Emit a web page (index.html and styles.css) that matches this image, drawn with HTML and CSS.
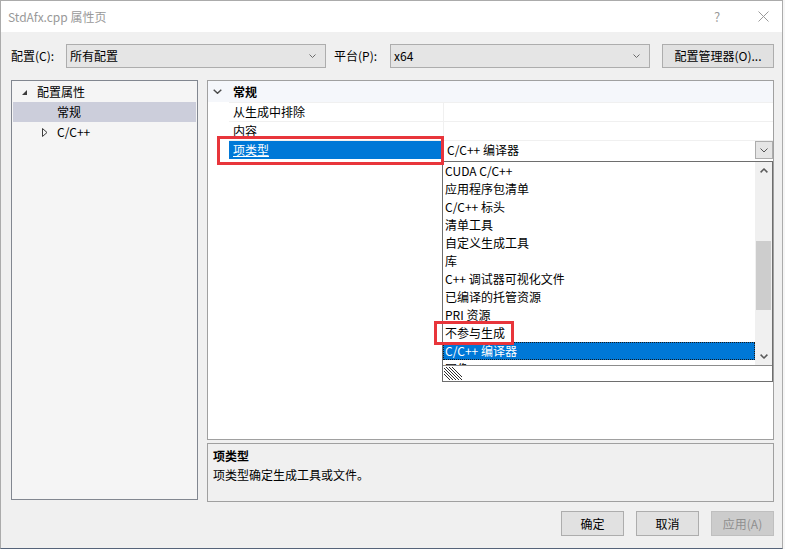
FILE: index.html
```html
<!DOCTYPE html>
<html lang="zh-CN">
<head>
<meta charset="utf-8">
<title>StdAfx.cpp 属性页</title>
<link rel="stylesheet" href="styles.css">
</head>
<body>
<div class="window">
  <div class="titlebar">
    <span class="title">StdAfx.cpp 属性页</span>
    <span class="help">?</span>
    <svg class="close" width="11" height="11" viewBox="0 0 11 11"><path d="M0.5 0.5 L10.5 10.5 M10.5 0.5 L0.5 10.5" stroke="#9a9a9a" stroke-width="1" fill="none"/></svg>
  </div>

  <div class="body">
    <div class="config-row">
      <span class="cfg-label">配置(C):</span>
      <div class="combo">
        <span class="combo-text">所有配置</span>
        <svg width="7" height="4" viewBox="0 0 7 4"><path d="M0.5 0.5 L3.5 3.5 L6.5 0.5" fill="none" stroke="#6a6a6a"/></svg>
      </div>
      <span class="cfg-label cfg-label-2">平台(P):</span>
      <div class="combo">
        <span class="combo-text">x64</span>
        <svg width="7" height="4" viewBox="0 0 7 4"><path d="M0.5 0.5 L3.5 3.5 L6.5 0.5" fill="none" stroke="#6a6a6a"/></svg>
      </div>
      <button class="btn btn-mgr">配置管理器(O)...</button>
    </div>

    <div class="main">
      <div class="tree">
        <div class="tree-row row-root">
          <svg class="twisty" width="5" height="5" viewBox="0 0 5 5"><path d="M5 0 L5 5 L0 5 Z" fill="#3c3c3c"/></svg>
          <span>配置属性</span>
        </div>
        <div class="tree-row row-leaf sel"><span>常规</span></div>
        <div class="tree-row row-child">
          <svg class="twisty" width="6" height="9" viewBox="0 0 6 9"><path d="M0.5 0.5 L5 4.5 L0.5 8.5 Z" fill="none" stroke="#3c3c3c"/></svg>
          <span>C/C++</span>
        </div>
      </div>

      <div class="right">
        <div class="grid">
          <div class="grid-head">
            <span class="gutter">
              <svg width="9" height="5" viewBox="0 0 9 5"><path d="M0.7 0.7 L4.5 4.3 L8.3 0.7" fill="none" stroke="#4a4a4a" stroke-width="1.4"/></svg>
            </span>
            <span class="head-name">常规</span>
          </div>
          <div class="grid-row">
            <span class="gutter"></span>
            <span class="name">从生成中排除</span>
            <span class="value"></span>
          </div>
          <div class="grid-row">
            <span class="gutter"></span>
            <span class="name">内容</span>
            <span class="value"></span>
          </div>
          <div class="grid-row">
            <span class="gutter"></span>
            <span class="name name-sel">项类型</span>
            <span class="value">
              <span class="value-text">C/C++ 编译器</span>
              <span class="drop-btn">
                <svg width="8" height="5" viewBox="0 0 8 5"><path d="M0.5 0.5 L4 4 L7.5 0.5" fill="none" stroke="#555"/></svg>
              </span>
            </span>
          </div>
        </div>
        <div class="desc">
          <div class="desc-title">项类型</div>
          <div>项类型确定生成工具或文件。</div>
        </div>
      </div>
    </div>

    <div class="buttons">
      <button class="btn">确定</button>
      <button class="btn">取消</button>
      <button class="btn btn-disabled">应用(A)</button>
    </div>
  </div>

  <!-- open item-type list, drawn over the grid -->
  <div class="dropdown">
    <div class="list-view">
      <div class="items">
        <div class="item">CUDA C/C++</div>
        <div class="item">应用程序包清单</div>
        <div class="item">C/C++ 标头</div>
        <div class="item">清单工具</div>
        <div class="item">自定义生成工具</div>
        <div class="item">库</div>
        <div class="item">C++ 调试器可视化文件</div>
        <div class="item">已编译的托管资源</div>
        <div class="item">PRI 资源</div>
        <div class="item">不参与生成</div>
        <div class="item item-sel">C/C++ 编译器</div>
        <div class="item">图像</div>
      </div>
      <div class="scrollbar">
        <div class="sb-arrow">
          <svg width="8" height="5" viewBox="0 0 8 5"><path d="M0.6 4.4 L4 1 L7.4 4.4" fill="none" stroke="#5a5a5a" stroke-width="1.5"/></svg>
        </div>
        <div class="sb-track"><div class="sb-thumb"></div></div>
        <div class="sb-arrow">
          <svg width="8" height="5" viewBox="0 0 8 5"><path d="M0.6 0.6 L4 4 L7.4 0.6" fill="none" stroke="#5a5a5a" stroke-width="1.5"/></svg>
        </div>
      </div>
    </div>
    <div class="grip-bar">
      <svg class="grip" width="18" height="13" viewBox="0 0 18 13">
        <path d="M0 1 L12 13 M2 0 L15 13 M5 0 L18 13 M8 0 L18 10 M0 4 L9 13 M0 7 L6 13" stroke="#2e2e2e" stroke-width="1" fill="none"/>
      </svg>
    </div>
  </div>

  <div class="mark mark-type"></div>
  <div class="mark mark-none"></div>
</div>
</body>
</html>
```

FILE: styles.css
```css
* {
  box-sizing: border-box;
  margin: 0;
  padding: 0;
}

html, body {
  width: 785px;
  height: 549px;
  overflow: hidden;
}

body {
  background: #f6f6f6;
  font-family: "Noto Sans CJK SC", "Noto Sans", sans-serif;
  font-size: 12px;
  color: #000;
}

.window {
  position: relative;
  width: 783px;
  height: 549px;
  border: 1px solid #ababab;
  border-bottom-color: #56647a;
  background: #f0f0f0;
  display: flex;
  flex-direction: column;
}

/* title bar */
.titlebar {
  flex: none;
  height: 31px;
  background: #fff;
  display: flex;
  align-items: center;
  padding-left: 7px;
  color: #999;
  line-height: 16px;
}

.title {
  flex: 1;
}

.help {
  width: 14px;
  text-align: center;
  font-size: 13px;
  margin-right: 34px;
  color: #9a9a9a;
}

.close {
  margin-right: 13px;
}

/* dialog body */
.body {
  flex: 1;
  display: flex;
  flex-direction: column;
  padding: 12px 8px 0 10px;
}

.config-row {
  display: flex;
  align-items: center;
  height: 24px;
  line-height: 16px;
}

.cfg-label {
  width: 55px;
}

.cfg-label-2 {
  width: 56px;
  margin-left: 8px;
}

.combo {
  width: 260px;
  height: 24px;
  border: 1px solid #adadad;
  background: #e5e5e5;
  display: flex;
  align-items: center;
  padding: 0 9px 0 3px;
}

.combo-text {
  flex: 1;
}

.btn {
  width: 63px;
  height: 25px;
  border: 1px solid #adadad;
  background: #e1e1e1;
  font: inherit;
  color: #000;
  line-height: 16px;
}

.btn-mgr {
  margin-left: auto;
  width: 112px;
  height: 24px;
}

.btn-disabled {
  background: #cccccc;
  border-color: #bfbfbf;
  color: #8f8f8f;
}

.main {
  display: flex;
  gap: 9px;
  margin-top: 12px;
  height: 422px;
}

/* category tree */
.tree {
  width: 187px;
  height: 420px;
  border: 1px solid #828790;
  background: #f5f5f5;
  padding: 1px;
}

.tree-row {
  height: 20px;
  display: flex;
  align-items: center;
  line-height: 16px;
}

.tree-row.sel {
  background: #cccedb;
}

.row-root {
  padding-left: 9px;
}

.row-root .twisty {
  margin-right: 10px;
}

.row-leaf {
  padding-left: 44px;
}

.row-child {
  padding-left: 29px;
}

.row-child .twisty {
  margin-right: 9px;
}

.right {
  flex: 1;
  display: flex;
  flex-direction: column;
  gap: 3px;
}

/* property grid */
.grid {
  height: 360px;
  border: 1px solid #a0a0a0;
  background: #fff;
}

.grid-head {
  height: 21px;
  display: flex;
  align-items: center;
  background: #f5f7fb;
  line-height: 16px;
}

.gutter {
  width: 21px;
  flex: none;
  display: flex;
  align-items: center;
  padding-left: 5px;
  align-self: stretch;
}

.head-name {
  font-weight: bold;
  padding-left: 4px;
}

.grid-row {
  height: 19px;
  display: flex;
  line-height: 16px;
}

.name {
  width: 214px;
  flex: none;
  border-top: 1px solid #f0f0f0;
  padding-left: 4px;
  display: flex;
  align-items: center;
}

.name-sel {
  background: #0078d7;
  color: #fff;
  text-decoration: underline;
  margin-right: 2px;
  width: 212px;
  background-clip: padding-box;
}

.value {
  flex: 1;
  border-top: 1px solid #f0f0f0;
  border-left: 1px solid #f0f0f0;
  display: flex;
  align-items: center;
  padding-left: 3px;
}

.value-text {
  flex: 1;
}

.drop-btn {
  width: 18px;
  height: 18px;
  border: 1px solid #acacac;
  background: #e5e5e5;
  display: flex;
  align-items: center;
  justify-content: center;
}

/* description pane */
.desc {
  height: 59px;
  border: 1px solid #a0a0a0;
  padding: 2px 5px;
  line-height: 19px;
}

.desc-title {
  font-weight: bold;
}

.buttons {
  display: flex;
  justify-content: flex-end;
  gap: 12px;
  margin-top: 9px;
}

/* dropdown popup */
.dropdown {
  position: absolute;
  left: 441px;
  top: 160px;
  width: 331px;
  height: 221px;
  border: 1px solid #6e6e6e;
  background: #fff;
  display: flex;
  flex-direction: column;
}

.list-view {
  height: 203px;
  display: flex;
  overflow: hidden;
}

.items {
  flex: 1;
  overflow: hidden;
}

.item {
  height: 18px;
  padding-left: 2px;
  display: flex;
  align-items: center;
  line-height: 16px;
  white-space: nowrap;
}

.item-sel {
  background: #0078d7;
  color: #fff;
  border: 1px dotted #1a1a1a;
  padding-left: 1px;
}

.scrollbar {
  width: 17px;
  flex: none;
  background: #f0f0f0;
  display: flex;
  flex-direction: column;
}

.sb-arrow {
  height: 17px;
  display: flex;
  align-items: center;
  justify-content: center;
}

.sb-track {
  flex: 1;
  padding: 62px 1px 0;
}

.sb-thumb {
  height: 69px;
  background: #cdcdcd;
}

.grip-bar {
  flex: 1;
  border-top: 1px solid #8c8c8c;
  padding: 1px 0 0 1px;
}

.grip {
  display: block;
}

/* red highlight frames */
.mark {
  position: absolute;
  border: 3px solid #e8353b;
}

.mark-type {
  left: 216px;
  top: 135px;
  width: 227px;
  height: 29px;
}

.mark-none {
  left: 433px;
  top: 320px;
  width: 80px;
  height: 24px;
}
```
